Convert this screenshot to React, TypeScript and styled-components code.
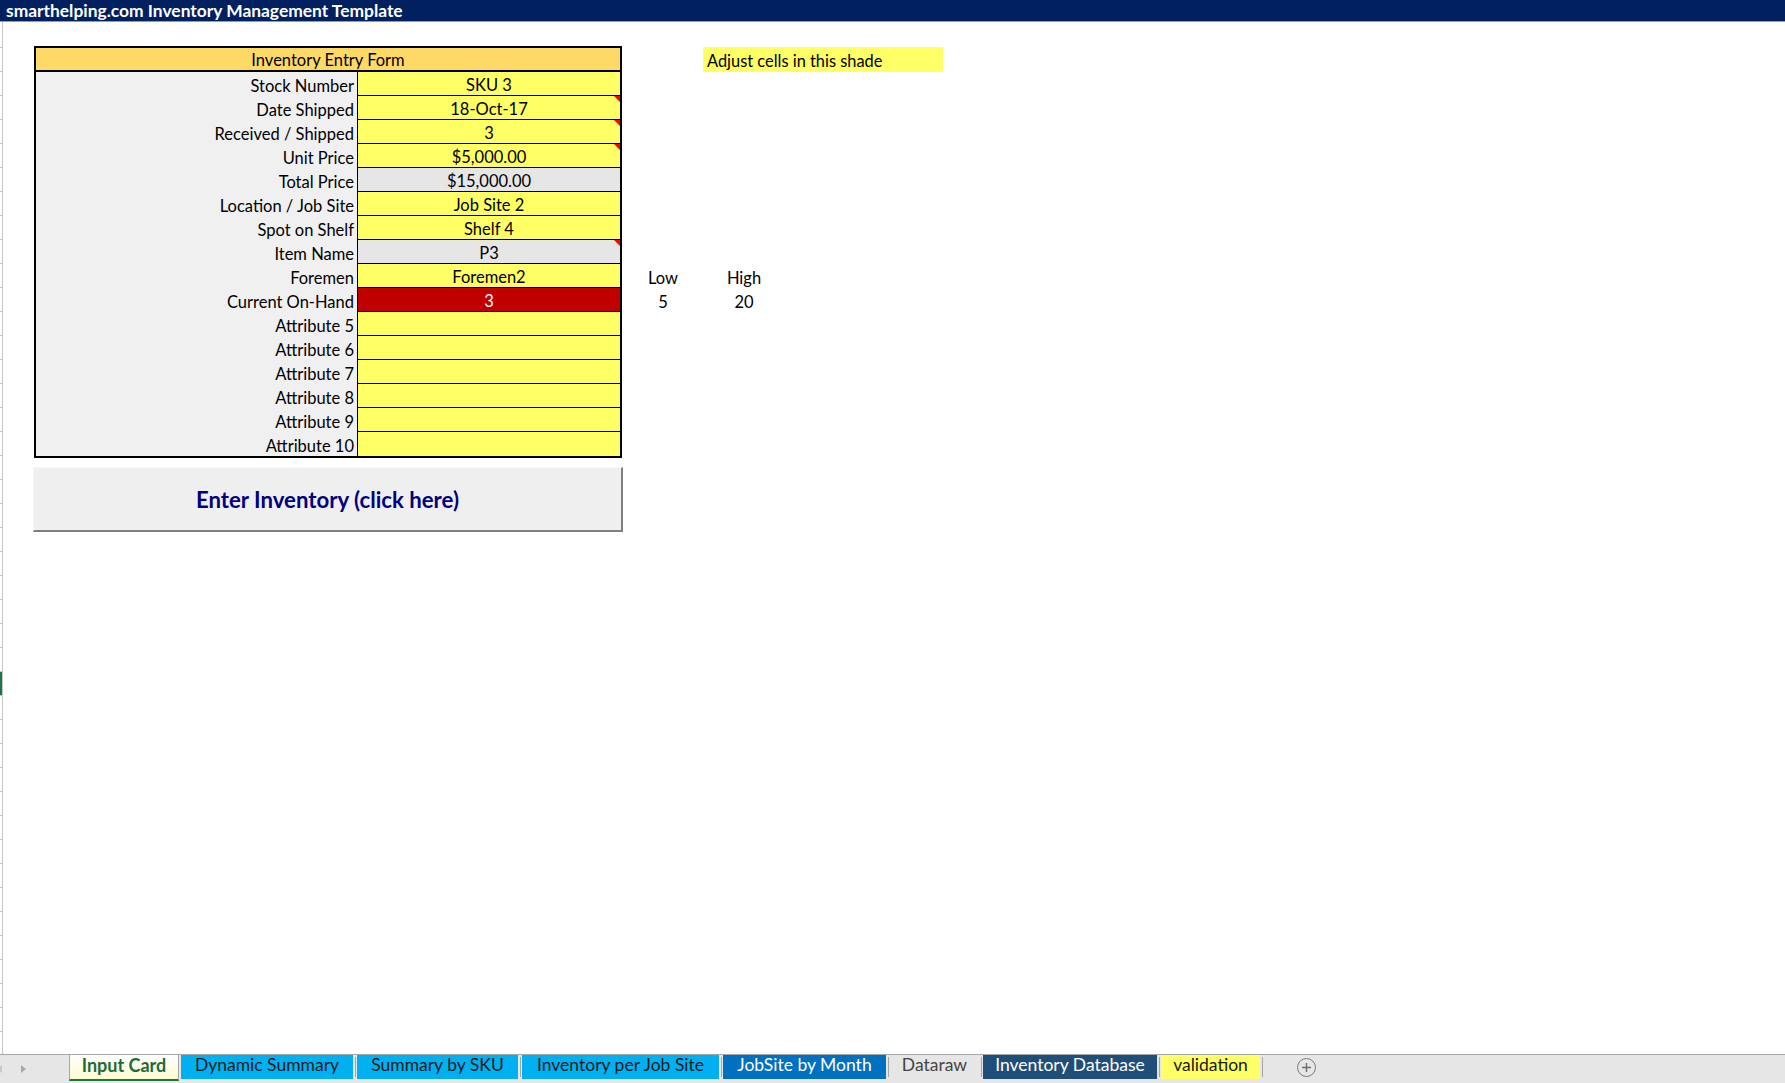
import React from "react";
import styled, { createGlobalStyle } from "styled-components";

const GlobalStyle = createGlobalStyle`
  html, body { margin: 0; padding: 0; }
  body {
    font-family: Lato, "Open Sans", "Liberation Sans", sans-serif;
    background: #ffffff;
    overflow: hidden;
  }
  * { box-sizing: border-box; }
`;

const Page = styled.div`
  width: 1785px;
  height: 1083px;
  display: flex;
  flex-direction: column;
  overflow: hidden;
`;

const TitleBar = styled.div`
  height: 22px;
  flex: none;
  background: #002060;
  border-bottom: 1px solid #9c9c9c;
  color: #ffffff;
  font-weight: 700;
  font-size: 17.4px;
  line-height: 22px;
  padding-left: 6px;
  white-space: nowrap;
`;

const SheetArea = styled.div`
  flex: 1;
  display: flex;
  min-height: 0;
  overflow: hidden;
`;

const RowHeaders = styled.div`
  width: 3px;
  flex: none;
  display: flex;
  flex-direction: column;
  border-right: 1px solid #c6c6c6;
  overflow: hidden;
`;

const RowHead = styled.div<{ $first?: boolean; $selected?: boolean }>`
  flex: none;
  height: ${(p) => (p.$first ? 26 : 24)}px;
  border-bottom: 1px solid #c6c6c6;
  background: ${(p) => (p.$selected ? "#217346" : "transparent")};
`;

const Sheet = styled.div`
  flex: 1;
  display: flex;
  align-items: flex-start;
  padding: 24px 0 0 31px;
`;

const LeftColumn = styled.div`
  width: 589px;
  display: flex;
  flex-direction: column;
`;

const Form = styled.div`
  width: 588px;
  border: 2px solid #000;
  display: flex;
  flex-direction: column;
`;

const FormHeader = styled.div`
  height: 24px;
  background: #ffd966;
  border-bottom: 2px solid #000;
  color: #000;
  font-size: 16.5px;
  display: flex;
  align-items: center;
  justify-content: center;
  padding-top: 2px;
  overflow: hidden;
`;

const Row = styled.div`
  height: 24px;
  display: grid;
  grid-template-columns: 322px 1fr;
  grid-template-rows: 24px;
`;

const Label = styled.div`
  background: #f0f0f0;
  border-right: 1px solid #000;
  color: #000;
  font-size: 16.5px;
  display: flex;
  align-items: center;
  justify-content: flex-end;
  padding: 3px 3px 0 0;
  white-space: nowrap;
  overflow: hidden;
`;

const Value = styled.div<{ $bg: string; $color: string; $last?: boolean }>`
  position: relative;
  background: ${(p) => p.$bg};
  color: ${(p) => p.$color};
  border-bottom: ${(p) => (p.$last ? "none" : "1px solid #000")};
  font-size: 16.5px;
  display: flex;
  align-items: center;
  justify-content: center;
  padding-top: 3px;
  white-space: nowrap;
  overflow: hidden;
`;

const CommentMark = styled.span`
  position: absolute;
  top: 0;
  right: 0;
  width: 0;
  height: 0;
  border-top: 6px solid #ff0000;
  border-left: 6px solid transparent;
`;

const EnterButton = styled.button`
  margin: 9px 0 0 -1px;
  width: 590px;
  height: 65px;
  background: #efefef;
  border: none;
  border-right: 2px solid #7f7f7f;
  border-bottom: 2px solid #7f7f7f;
  border-top: 1px solid #f8f8f8;
  border-left: 1px solid #f8f8f8;
  color: #000080;
  font-family: Lato, "Open Sans", "Liberation Sans", sans-serif;
  font-weight: 700;
  font-size: 22.2px;
  padding: 0;
  cursor: pointer;
`;

const SidePanel = styled.div`
  display: flex;
  flex-direction: column;
  padding-top: 1px;
`;

const ShadeNote = styled.div`
  margin-left: 80px;
  width: 240px;
  height: 25px;
  background: #ffff66;
  color: #000;
  font-size: 16.4px;
  display: flex;
  align-items: center;
  padding: 2px 0 0 4px;
  white-space: nowrap;
`;

const Thresholds = styled.div`
  margin-top: 192px;
  display: grid;
  grid-template-columns: 80px 82px;
  grid-auto-rows: 24px;
`;

const ThresholdCell = styled.div`
  font-size: 16.5px;
  display: flex;
  align-items: center;
  justify-content: center;
  padding-top: 3px;
  color: #000;
`;

const TabBar = styled.div`
  flex: none;
  height: 29px;
  background: #e6e6e6;
  border-top: 1px solid #a6a6a6;
  display: flex;
  align-items: flex-start;
`;

const NavArea = styled.div`
  width: 72px;
  height: 28px;
  display: flex;
  align-items: center;
  gap: 19px;
  margin-left: -3px;
`;

const NavArrow = styled.span<{ $dir: "left" | "right"; $shade: string }>`
  width: 0;
  height: 0;
  border-top: 4.5px solid transparent;
  border-bottom: 4.5px solid transparent;
  ${(p) =>
    p.$dir === "left"
      ? `border-right: 5px solid ${p.$shade};`
      : `border-left: 5px solid ${p.$shade};`}
`;

const Tab = styled.div<{ $w: number; $bg: string; $color: string; $active?: boolean }>`
  flex: none;
  width: ${(p) => p.$w}px;
  height: ${(p) => (p.$active ? 26 : 24)}px;
  background: ${(p) => (p.$active ? "linear-gradient(#ffffff, #fffbd0)" : p.$bg)};
  color: ${(p) => p.$color};
  font-size: ${(p) => (p.$active ? 18 : 17.5)}px;
  font-weight: ${(p) => (p.$active ? 700 : 400)};
  line-height: 20px;
  text-align: center;
  white-space: nowrap;
  ${(p) =>
    p.$active
      ? `border-left: 1px solid #a6a6a6; border-right: 1px solid #a6a6a6; border-bottom: 2px solid #217346; margin-right: 2px;`
      : ""}
`;

const Sep = styled.div`
  flex: none;
  width: 4px;
  height: 24px;
  display: flex;
  justify-content: center;
  align-items: center;
  &::after {
    content: "";
    width: 1px;
    height: 20px;
    background: #a6a6a6;
  }
`;

const AddSheet = styled.div`
  margin: 3px 0 0 33px;
  width: 19px;
  height: 19px;
  border-radius: 50%;
  border: 1.5px solid #7a7a7a;
  display: flex;
  align-items: center;
  justify-content: center;
`;

type Field = {
  label: string;
  value: string;
  bg: string;
  color?: string;
  mark?: boolean;
};

const YELLOW = "#ffff66";
const GRAY = "#e7e6e6";

const fields: Field[] = [
  { label: "Stock Number", value: "SKU 3", bg: YELLOW },
  { label: "Date Shipped", value: "18-Oct-17", bg: YELLOW, mark: true },
  { label: "Received / Shipped", value: "3", bg: YELLOW, mark: true },
  { label: "Unit Price", value: "$5,000.00", bg: YELLOW, mark: true },
  { label: "Total Price", value: "$15,000.00", bg: GRAY },
  { label: "Location / Job Site", value: "Job Site 2", bg: YELLOW },
  { label: "Spot on Shelf", value: "Shelf 4", bg: YELLOW },
  { label: "Item Name", value: "P3", bg: GRAY, mark: true },
  { label: "Foremen", value: "Foremen2", bg: YELLOW },
  { label: "Current On-Hand", value: "3", bg: "#c00000", color: "#ffffff" },
  { label: "Attribute 5", value: "", bg: YELLOW },
  { label: "Attribute 6", value: "", bg: YELLOW },
  { label: "Attribute 7", value: "", bg: YELLOW },
  { label: "Attribute 8", value: "", bg: YELLOW },
  { label: "Attribute 9", value: "", bg: YELLOW },
  { label: "Attribute 10", value: "", bg: YELLOW },
];

type SheetTab = { name: string; w: number; bg: string; color: string; active?: boolean };

const tabs: SheetTab[] = [
  { name: "Input Card", w: 110, bg: "transparent", color: "#1e6b3a", active: true },
  { name: "Dynamic Summary", w: 172, bg: "#00b0f0", color: "#1a1a1a" },
  { name: "Summary by SKU", w: 161, bg: "#00b0f0", color: "#1a1a1a" },
  { name: "Inventory per Job Site", w: 197, bg: "#00b0f0", color: "#1a1a1a" },
  { name: "JobSite by Month", w: 163, bg: "#0070c0", color: "#ffffff" },
  { name: "Dataraw", w: 89, bg: "transparent", color: "#444444" },
  { name: "Inventory Database", w: 174, bg: "#1f4e79", color: "#ffffff" },
  { name: "validation", w: 99, bg: "#ffff66", color: "#1a1a1a" },
];

export default function App() {
  const rowHeads = Array.from({ length: 44 }, (_, i) => i);
  return (
    <Page>
      <GlobalStyle />
      <TitleBar>smarthelping.com Inventory Management Template</TitleBar>
      <SheetArea>
        <RowHeaders>
          {rowHeads.map((i) => (
            <RowHead key={i} $first={i === 0} $selected={i === 27} />
          ))}
        </RowHeaders>
        <Sheet>
          <LeftColumn>
            <Form>
              <FormHeader>Inventory Entry Form</FormHeader>
              {fields.map((f, i) => (
                <Row key={f.label}>
                  <Label>{f.label}</Label>
                  <Value $bg={f.bg} $color={f.color ?? "#000"} $last={i === fields.length - 1}>
                    {f.value}
                    {f.mark && <CommentMark />}
                  </Value>
                </Row>
              ))}
            </Form>
            <EnterButton>Enter Inventory (click here)</EnterButton>
          </LeftColumn>
          <SidePanel>
            <ShadeNote>Adjust cells in this shade</ShadeNote>
            <Thresholds>
              <ThresholdCell>Low</ThresholdCell>
              <ThresholdCell>High</ThresholdCell>
              <ThresholdCell>5</ThresholdCell>
              <ThresholdCell>20</ThresholdCell>
            </Thresholds>
          </SidePanel>
        </Sheet>
      </SheetArea>
      <TabBar>
        <NavArea>
          <NavArrow $dir="left" $shade="#c8c8c8" />
          <NavArrow $dir="right" $shade="#a8a8a8" />
        </NavArea>
        {tabs.map((t, i) => (
          <React.Fragment key={t.name}>
            <Tab $w={t.w} $bg={t.bg} $color={t.color} $active={t.active}>
              {t.name}
            </Tab>
            {i > 0 && <Sep />}
          </React.Fragment>
        ))}
        <AddSheet>
          <svg width="11" height="11" viewBox="0 0 11 11">
            <path d="M5.5 1v9M1 5.5h9" stroke="#6e6e6e" strokeWidth="1.4" />
          </svg>
        </AddSheet>
      </TabBar>
    </Page>
  );
}
